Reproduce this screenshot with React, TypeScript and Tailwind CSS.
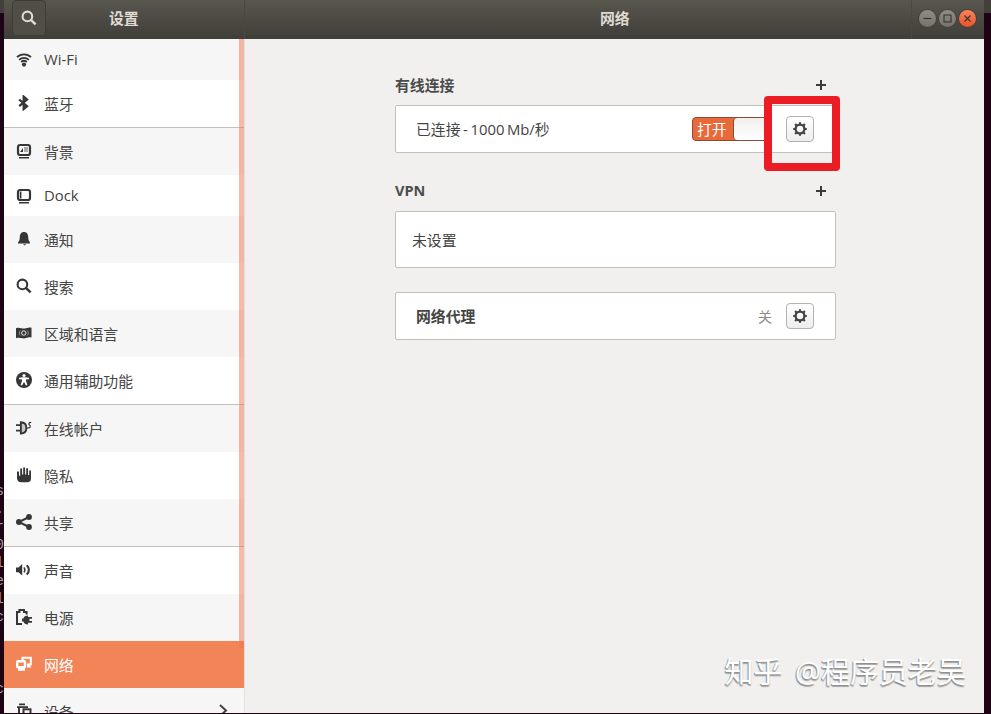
import type { ReactNode } from 'react';

type Item = {
  label: string;
  icon: ReactNode;
  height?: string;
  shaded?: boolean;
  divider?: boolean;
  active?: boolean;
  arrow?: boolean;
};

const Svg = ({ children }: { children: ReactNode }) => (
  <svg width="16" height="16" viewBox="0 0 16 16" fill="currentColor" className="shrink-0">
    {children}
  </svg>
);

const SearchIcon = () => (
  <Svg>
    <circle cx="6.4" cy="6.4" r="4.8" fill="none" stroke="currentColor" strokeWidth="2.1" />
    <path d="M9.6 9.6L14.6 14.4" stroke="currentColor" strokeWidth="2.5" />
  </Svg>
);

const GearIcon = () => (
  <Svg>
    <circle cx="8" cy="8" r="4.4" fill="none" stroke="currentColor" strokeWidth="2.3" />
    <g stroke="currentColor" strokeWidth="2.1">
      <path d="M8 1.2V4M8 12V14.8M1.2 8H4M12 8H14.8" />
      <path d="M3.1 3.1L5.2 5.2M10.8 10.8L12.9 12.9M12.9 3.1L10.8 5.2M5.2 10.8L3.1 12.9" />
    </g>
  </Svg>
);

const items: Item[] = [
  {
    label: 'Wi-Fi',
    height: 'h-[41px]',
    shaded: true,
    icon: (
      <Svg>
        <g fill="none" stroke="currentColor" strokeWidth="1.8">
          <path d="M1 5.2C4.8 1.4 11.2 1.4 15 5.2" />
          <path d="M3.2 7.8C5.8 5.2 10.2 5.2 12.8 7.8" />
          <path d="M5.2 10C6.8 8.6 9.2 8.6 10.8 10" />
        </g>
        <circle cx="8" cy="12.6" r="2.1" />
      </Svg>
    ),
  },
  {
    label: '蓝牙',
    divider: true,
    icon: (
      <Svg>
        <path d="M3.2 4.5L11 11.2L7.7 14V1.7L11 4.5L3.2 11.2" fill="none" stroke="currentColor" strokeWidth="2.3" />
      </Svg>
    ),
  },
  {
    label: '背景',
    shaded: true,
    icon: (
      <Svg>
        <rect x="2" y="2" width="12" height="10" rx="2" fill="none" stroke="currentColor" strokeWidth="2.2" />
        <path d="M4 9L7 5V9ZM3 14H13V15.6H3Z" />
        <path d="M8 4H12V9H8Z" opacity=".4" />
      </Svg>
    ),
  },
  {
    label: 'Dock',
    height: 'h-[41px]',
    icon: (
      <Svg>
        <rect x="2" y="2" width="12" height="10" rx="2" fill="none" stroke="currentColor" strokeWidth="2.2" />
        <path d="M3.8 3.5H5.4V10.5H3.8ZM3 14H13V15.6H3Z" />
      </Svg>
    ),
  },
  {
    label: '通知',
    shaded: true,
    icon: (
      <Svg>
        <path d="M8 1C11 1 12.1 3.2 12.2 6C12.3 9 13 10.3 14 11.6V12.6H2V11.6C3 10.3 3.7 9 3.8 6C3.9 3.2 5 1 8 1ZM6.8 13.2H10.2L8.8 14.4Z" />
      </Svg>
    ),
  },
  { label: '搜索', icon: <SearchIcon /> },
  {
    label: '区域和语言',
    shaded: true,
    icon: (
      <Svg>
        <path d="M0 3.2C4 1.6 6 4.4 10 3.2C12.5 2.5 14 2.2 15.5 2.8V12.6C12 11.6 10 13.8 6.5 13.3C4 12.8 2 12.4 0 13.2Z" />
        <circle cx="7.8" cy="8" r="2.2" fill="none" stroke="#eee" strokeWidth="1" />
        <path d="M4.3 5.5C3 7 3 9 4.3 10.5M11.3 5.5C12.6 7 12.6 9 11.3 10.5" fill="none" stroke="#aaa" strokeWidth=".8" />
      </Svg>
    ),
  },
  {
    label: '通用辅助功能',
    divider: true,
    icon: (
      <Svg>
        <circle cx="8" cy="8" r="8" />
        <circle cx="8" cy="3.5" r="1.6" fill="#fff" />
        <path d="M3 5.8L6.5 5.3H9.5L13 5.8V7.2L10 7.6V9L11.4 13L10 13.6L8 10L6 13.6L4.6 13L6 9V7.6L3 7.2Z" fill="#fff" />
      </Svg>
    ),
  },
  {
    label: '在线帐户',
    shaded: true,
    icon: (
      <Svg>
        <path d="M0 4.2H4V6H0ZM0 9.8H4V11.6H0Z" />
        <path d="M4.9 2.2V13.6C8.8 13.4 10.4 11 10.4 8C10.4 5 8.8 2.4 4.9 2.2Z" fill="#c9c9c9" stroke="currentColor" strokeWidth="1.9" />
        <path d="M10.4 8H12M15.2 2.5C12.8 2.2 12.2 4.3 13.5 5.1C15 6.1 14.4 8 12 7.8" fill="none" stroke="currentColor" strokeWidth="1.2" />
      </Svg>
    ),
  },
  {
    label: '隐私',
    icon: (
      <Svg>
        <path d="M1 4.5H3V8.8H4.2V1.5H6.1V7.5H7.2V.6H9.1V7.5H10.2V1.2H12.1V8H13.2V3.5H15V11.5C15 14 13.6 15.2 11.5 15.2H5C2.6 15.2 1 13.6 1 11Z" />
      </Svg>
    ),
  },
  {
    label: '共享',
    shaded: true,
    divider: true,
    icon: (
      <Svg>
        <path d="M13 3L3 8L13 13" fill="none" stroke="currentColor" strokeWidth="2" />
        <circle cx="13" cy="3" r="2.9" />
        <circle cx="2.9" cy="8" r="2.9" />
        <circle cx="13" cy="13" r="2.9" />
      </Svg>
    ),
  },
  {
    label: '声音',
    icon: (
      <Svg>
        <path d="M0 5.5H2.5L6.2 2V13.6L2.5 10.2H0Z" />
        <path d="M8 5.4C9.1 7 9.1 8.8 8 10.4" fill="none" stroke="currentColor" strokeWidth="1.5" />
        <path d="M10.7 3.2C13.6 5.7 13.6 10 10.7 12.5" fill="none" stroke="currentColor" strokeWidth="2.1" />
      </Svg>
    ),
  },
  {
    label: '电源',
    shaded: true,
    icon: (
      <Svg>
        <path d="M6 14.9H1V3H3.4V1H8V3H10.6V5.5" fill="none" stroke="currentColor" strokeWidth="2" />
        <path d="M6 9.4H7.5C8 7.5 9.5 6.6 12 6.6V8H16V9.8H13.5V12H16V13.8H12V15.4C9.5 15.4 8 14.3 7.5 12.4H6Z" />
      </Svg>
    ),
  },
  {
    label: '网络',
    active: true,
    icon: (
      <Svg>
        <path d="M6.5 4V1.8H14.8V8.6H11" fill="none" stroke="currentColor" strokeWidth="2" />
        <rect x="1.2" y="5.2" width="7.8" height="6" rx=".8" fill="none" stroke="currentColor" strokeWidth="2.4" />
        <path d="M2 12H9V14.8H2ZM11 9H13.5L15.5 11.6H11Z" />
      </Svg>
    ),
  },
  {
    label: '设备',
    shaded: true,
    arrow: true,
    icon: (
      <Svg>
        <path d="M3 .6H9V2.3H3ZM1 3.3H12V5H1ZM2 5H4V12H2Z" />
        <rect x="7.5" y="6.3" width="7" height="9" fill="none" stroke="currentColor" strokeWidth="2" />
      </Svg>
    ),
  },
];

// Terminal text peeking out to the left of the window
const terminal = ['rs', 's.', 'er', ' 0', 'dl', 'ne', 'dl', '.c', '', '', '', 'nc'];

const Row = ({ item }: { item: Item }) => {
  const bg = item.active ? 'bg-[#f28558] text-white' : item.shaded ? 'bg-[#f6f6f6]' : 'bg-white';
  return (
    <li
      className={`flex shrink-0 items-center gap-3 pr-4 pl-3 ${item.divider ? 'box-content border-b border-[#c3c0bc]' : ''} ${item.height ?? 'h-[47px]'} ${bg}`}
    >
      <span className={`${item.height ? '' : '-mt-0.5'} ${item.active ? '' : 'text-[#363636]'}`}>{item.icon}</span>
      <span className={item.height ? 'pb-0.5' : 'pt-px'}>{item.label}</span>
      {item.arrow && (
        <svg width="9" height="14" viewBox="0 0 9 14" className="-mt-1 ml-auto" fill="none" stroke="currentColor" strokeWidth="2">
          <path d="M1 2L7 7.5L1 13" />
        </svg>
      )}
    </li>
  );
};

const Plus = () => (
  <svg width="10" height="10" viewBox="0 0 10 10" className="mr-2.5" stroke="#3c3c3c" strokeWidth="2">
    <path d="M5 0V10M0 5H10" />
  </svg>
);

const GearButton = () => (
  <button className="flex h-[26px] w-7 items-center justify-center rounded border border-[#b5b1ac] bg-linear-to-b from-white to-[#ededed]">
    <GearIcon />
  </button>
);

const TitleBar = () => (
  <header className="flex h-[39px] shrink-0 bg-linear-to-b from-[#59564e] to-[#403e39] text-[#dfdbd2]">
    <div className="flex w-[241px] items-center border-r border-[#4a4842] pl-2">
      <button className="-mt-[3px] flex h-9 w-[34px] items-center justify-center rounded border border-[#3e3c37] bg-[#504e46]">
        <SearchIcon />
      </button>
      <span className="ml-[63px] pb-[3px] font-bold">设置</span>
    </div>
    <div className="flex flex-1 items-center">
      <span className="ml-[355px] pb-[3px] font-bold">网络</span>
      <div className="ml-auto flex h-full items-center gap-[3px] border-l border-[#4a4842] pr-2 pl-[7px]">
        <WindowButton path="M4.5 8.5H12.5" />
        <WindowButton path="M5 5H12V12H5Z" />
        <WindowButton path="M5.5 5.5L11.5 11.5M11.5 5.5L5.5 11.5" close />
      </div>
    </div>
  </header>
);

const WindowButton = ({ path, close }: { path: string; close?: boolean }) => (
  <button
    className={`-mt-[3px] flex size-[17px] items-center justify-center rounded-full ${
      close ? 'bg-linear-to-b from-[#f9845a] to-[#e75225]' : 'bg-linear-to-b from-[#8f8c85] to-[#75736c]'
    } shadow-[0_0_0_1px_#454239]`}
  >
    <svg width="17" height="17" viewBox="0 0 17 17" fill="none" stroke="#35332f" strokeWidth="1.1">
      <path d={path} />
    </svg>
  </button>
);

const Panel = () => (
  <main className="relative flex-1 bg-[#f1f0ee]">
    <div className="ml-[150px] flex w-[441px] flex-col">
      <div className="mt-[35px] flex h-[22px] items-center justify-between text-[#4c4c4c]">
        <h2 className="pb-px font-bold">有线连接</h2>
        <Plus />
      </div>
      <div className="mt-[9px] flex h-12 items-center rounded-xs border border-[#c3c0bc] bg-white pr-[21px] pl-5">
        <span className="[word-spacing:-1.3px]">已连接 - 1000 Mb/秒</span>
        <div className="ml-auto flex h-6 w-[78px] rounded border border-[#8d4a31] bg-[#e8693a]">
          <span className="w-10 shrink-0 pl-1 leading-[23px] text-white">打开</span>
          <span className="flex-1 rounded border-l border-[#8d4a31] bg-linear-to-b from-[#f0efed] to-white" />
        </div>
        <div className="ml-4">
          <GearButton />
        </div>
      </div>

      <div className="mt-[27px] flex h-[22px] items-center justify-between text-[#4c4c4c]">
        <h2 className="text-[14.5px] font-bold">VPN</h2>
        <Plus />
      </div>
      <div className="mt-[9px] flex h-[57px] items-center rounded-xs border border-[#c3c0bc] bg-white px-4">
        <span>未设置</span>
      </div>

      <div className="mt-6 flex h-12 items-center rounded-xs border border-[#c3c0bc] bg-white pr-[21px] pl-5">
        <span className="font-bold">网络代理</span>
        <span className="mr-3.5 ml-auto pt-px text-[14px] text-[#8c8c8c]">关</span>
        <GearButton />
      </div>
    </div>

    {/* Highlight around the settings button */}
    <div className="absolute top-[57px] left-[519px] h-[75px] w-[76px] rounded border-8 border-[#eb1c24]" />
    <div className="absolute right-[18px] bottom-[19px] text-[29px] leading-[44px] whitespace-nowrap text-white [text-shadow:-1px_1px_1px_#8e8e8e,0_2px_1px_#a8a8a8] [word-spacing:5px]">
      知乎 @程序员老吴
    </div>
  </main>
);

export default function App() {
  return (
    <div className="flex h-[714px] w-[991px] overflow-hidden bg-[#1e0315] font-['Open_Sans','Noto_Sans_CJK_SC',sans-serif] text-[14.85px] leading-[22px] text-[#444]">
      <div className="w-1 shrink-0 overflow-hidden border-t-[13px] border-[#43403b] pt-[469px] font-['Liberation_Mono',monospace] text-[14px] leading-[18px] text-[#a89da5]">
        {terminal.map((text, i) => (
          <div key={i} className="-ml-[13px] h-[18px] whitespace-pre">
            {text}
          </div>
        ))}
      </div>
      <div className="flex h-[713px] w-[980px] shrink-0 flex-col overflow-hidden">
        <TitleBar />
        <div className="flex min-h-0 flex-1">
          <aside className="relative w-[241px] shrink-0 overflow-hidden border-r border-[#e3dfdc]">
            <ul className="flex flex-col">
              {items.map((item) => (
                <Row key={item.label} item={item} />
              ))}
            </ul>
            {/* Scrollbar */}
            <div className="absolute top-0 right-0 h-[609px] w-[5px] rounded-b bg-[#ed764d]/50" />
          </aside>
          <Panel />
        </div>
      </div>
      <div className="flex-1 border-t-[13px] border-[#43403b]" />
    </div>
  );
}
